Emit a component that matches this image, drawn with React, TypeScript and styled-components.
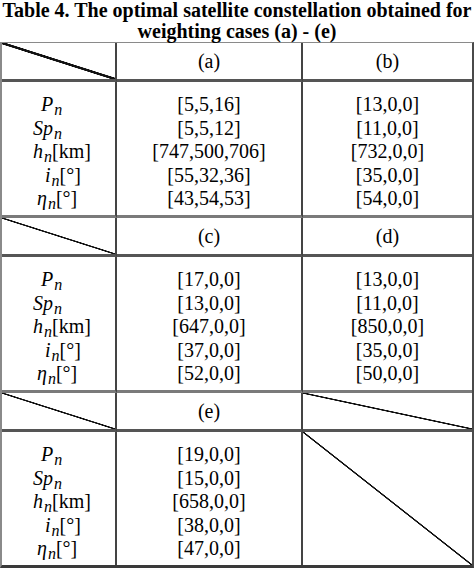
import React from "react";
import styled, { createGlobalStyle, css } from "styled-components";

const GlobalStyle = createGlobalStyle`
  html, body {
    margin: 0;
    padding: 0;
    background: #fff;
  }
  body {
    font-family: "Liberation Serif", serif;
    color: #000;
  }
`;

type Label = { sym: string; unit?: string; indent: number };

const labels: Label[] = [
  { sym: "P", indent: 39 },
  { sym: "Sp", indent: 31 },
  { sym: "h", unit: "[km]", indent: 31 },
  { sym: "i", unit: "[°]", indent: 43 },
  { sym: "η", unit: "[°]", indent: 35 },
];

type Block = {
  cases: (string | null)[];
  values: (string[] | null)[];
};

const blocks: Block[] = [
  {
    cases: ["(a)", "(b)"],
    values: [
      ["[5,5,16]", "[5,5,12]", "[747,500,706]", "[55,32,36]", "[43,54,53]"],
      ["[13,0,0]", "[11,0,0]", "[732,0,0]", "[35,0,0]", "[54,0,0]"],
    ],
  },
  {
    cases: ["(c)", "(d)"],
    values: [
      ["[17,0,0]", "[13,0,0]", "[647,0,0]", "[37,0,0]", "[52,0,0]"],
      ["[13,0,0]", "[11,0,0]", "[850,0,0]", "[35,0,0]", "[50,0,0]"],
    ],
  },
  {
    cases: ["(e)", null],
    values: [["[19,0,0]", "[15,0,0]", "[658,0,0]", "[38,0,0]", "[47,0,0]"], null],
  },
];

const App = () => (
  <>
    <GlobalStyle />
    <Title>
      <TitleLine>Table 4. The optimal satellite constellation obtained for</TitleLine>
      <TitleLine>weighting cases (a) - (e)</TitleLine>
    </Title>
    <Grid>
      {blocks.map((block, b) => {
        const last = b === blocks.length - 1;
        return (
          <React.Fragment key={b}>
            <HeadCell $diagonal={b === 0 ? 2 : 1} $col={0} />
            {block.cases.map((c, i) => (
              <HeadCell key={i} $col={i + 1} $diagonal={c === null ? 1 : 0}>
                {c}
              </HeadCell>
            ))}
            <DataCell $col={0} $last={last}>
              {labels.map((l, i) => (
                <LabelLine key={i} $indent={l.indent}>
                  <Sym>{l.sym}</Sym>
                  <Sub>n</Sub>
                  {l.unit}
                </LabelLine>
              ))}
            </DataCell>
            {block.values.map((vals, i) => (
              <DataCell key={i} $col={i + 1} $last={last} $diagonal={vals === null ? 1 : 0}>
                {vals?.map((v, j) => (
                  <ValueLine key={j}>{v}</ValueLine>
                ))}
              </DataCell>
            ))}
          </React.Fragment>
        );
      })}
    </Grid>
  </>
);

export default App;

const Title = styled.div`
  font-family: "Liberation Serif", serif;
  text-align: center;
  font-weight: bold;
  font-size: 20px;
  line-height: 21px;
  height: 42px;
  color: #000;
`;

const TitleLine = styled.div`
  white-space: nowrap;
`;

const Grid = styled.div`
  font-family: "Liberation Serif", serif;
  display: grid;
  grid-template-columns: 115px 186px 1fr;
  border-top: 1px solid #8a8a8a;
  border-left: 2px solid #8a8a8a;
  border-right: 2px solid #4a4a4a;
  border-bottom: 3px solid #3a3a3a;
  font-size: 20px;
  color: #000;
`;

const diagonalLine = (w: number) => css`
  background: linear-gradient(
    to top right,
    #fff calc(50% - ${w / 2 + 0.5}px),
    #111 calc(50% - ${w / 2}px),
    #111 calc(50% + ${w / 2}px),
    #fff calc(50% + ${w / 2 + 0.5}px)
  );
`;

const HeadCell = styled.div<{ $col: number; $diagonal?: number }>`
  box-sizing: border-box;
  background: #fff;
  border-right: ${(p) => (p.$col < 2 ? "2px solid #444" : "none")};
  ${(p) => (p.$diagonal ? diagonalLine(p.$diagonal) : "")}
  height: 39px;
  border-bottom: 3px solid #555;
  display: flex;
  align-items: center;
  justify-content: center;
  line-height: 23px;
`;

const DataCell = styled.div<{ $col: number; $diagonal?: number; $last?: boolean }>`
  box-sizing: border-box;
  background: #fff;
  border-right: ${(p) => (p.$col < 2 ? "2px solid #444" : "none")};
  ${(p) => (p.$diagonal ? diagonalLine(p.$diagonal) : "")}
  height: ${(p) => (p.$last ? 133 : 136)}px;
  border-bottom: ${(p) => (p.$last ? "none" : "3px solid #7a7a7a")};
  display: flex;
  flex-direction: column;
  justify-content: center;
  padding-top: 7px;
`;

const LabelLine = styled.div<{ $indent: number }>`
  height: 23.6px;
  line-height: 23.6px;
  padding-left: ${(p) => p.$indent}px;
  white-space: nowrap;
`;

const Sym = styled.span`
  font-style: italic;
`;

const Sub = styled.span`
  font-style: italic;
  font-size: 16px;
  position: relative;
  top: 4px;
  margin-left: 1px;
`;

const ValueLine = styled.div`
  height: 23.6px;
  line-height: 23.6px;
  text-align: center;
  white-space: nowrap;
`;
